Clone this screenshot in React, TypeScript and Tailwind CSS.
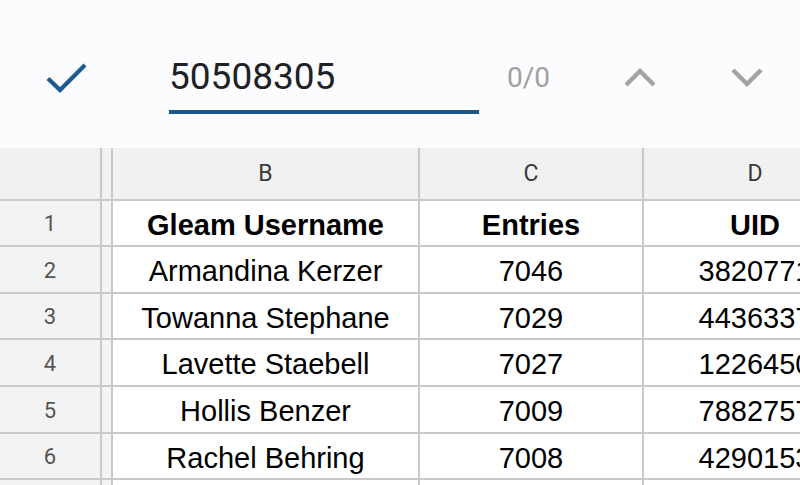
import React from 'react';

const rows = [
  { name: 'Gleam Username', entries: 'Entries', uid: 'UID', bold: true },
  { name: 'Armandina Kerzer', entries: '7046', uid: '3820771' },
  { name: 'Towanna Stephane', entries: '7029', uid: '4436337' },
  { name: 'Lavette Staebell', entries: '7027', uid: '1226450' },
  { name: 'Hollis Benzer', entries: '7009', uid: '7882757' },
  { name: 'Rachel Behring', entries: '7008', uid: '4290153' },
  { name: '', entries: '', uid: '' },
];

const cellFont = { fontFamily: '"Liberation Sans", Arial, sans-serif' };
const uiFont = { fontFamily: 'Roboto, "Noto Sans", sans-serif' };

const FindBar = () => (
  <div className="flex items-start h-[148px] bg-[#fcfbfd]" style={uiFont}>
    {/* confirm */}
    <svg className="ml-[44px] mt-[60px] w-[46px] h-[36px]" viewBox="44 60 46 36" fill="none">
      <path d="M48 78.5 L60 90 L85 65" stroke="#1c5b91" strokeWidth="4.2" strokeLinecap="butt" strokeLinejoin="miter" />
    </svg>

    <div className="ml-[79px] mt-[58px] w-[310px] flex flex-col">
      <div className="text-[37px] leading-[37px] text-[#202124]">50508305</div>
      <div className="mt-[15px] h-[4px] bg-[#1c5a8e]" />
    </div>

    <div className="ml-[28px] mt-[64px] text-[28px] leading-[28px] text-[#a0a0a0]">0/0</div>

    <svg className="ml-[72px] mt-[64px] w-[36px] h-[26px]" viewBox="622 64 36 26" fill="none">
      <path d="M626 85 L640 71 L654 85" stroke="#a3a3a3" strokeWidth="4.4" />
    </svg>

    <svg className="ml-[71px] mt-[64px] w-[36px] h-[26px]" viewBox="729 64 36 26" fill="none">
      <path d="M733 70 L747 84 L761 70" stroke="#a3a3a3" strokeWidth="4.4" />
    </svg>
  </div>
);

const Sheet = () => (
  <div className="grid grid-cols-[100px_9px_305px_222px_222px] grid-rows-[51px_44px_45px_44px_45px_45px_44px_44px] gap-[2px] bg-[#c9c9c9]">
    {/* column headers */}
    <div className="bg-[#f1f1f1]" />
    <div className="bg-[#f1f1f1]" />
    {['B', 'C', 'D'].map((letter) => (
      <div
        key={letter}
        className="bg-[#f1f1f1] flex items-center justify-center pt-[1px] text-[23px] text-[#3a3a3a]"
        style={uiFont}
      >
        {letter}
      </div>
    ))}

    {rows.map((row, i) => (
      <React.Fragment key={i}>
        <div
          className="bg-[#f3f3f3] flex items-center justify-center pt-[1px] text-[22px] text-[#555]"
          style={uiFont}
        >
          {i + 1}
        </div>
        <div className="bg-[#f4f4f4]" />
        {[row.name, row.entries, row.uid].map((value, j) => (
          <div
            key={j}
            className={`bg-white flex items-center justify-center pt-[5px] text-[29px] text-black whitespace-nowrap ${
              row.bold ? 'font-bold' : 'font-normal'
            }`}
            style={cellFont}
          >
            {value}
          </div>
        ))}
      </React.Fragment>
    ))}
  </div>
);

const App = () => {
  return (
    <div className="w-[800px] h-[485px] overflow-hidden bg-white">
      <FindBar />
      <Sheet />
    </div>
  );
};

export default App;
